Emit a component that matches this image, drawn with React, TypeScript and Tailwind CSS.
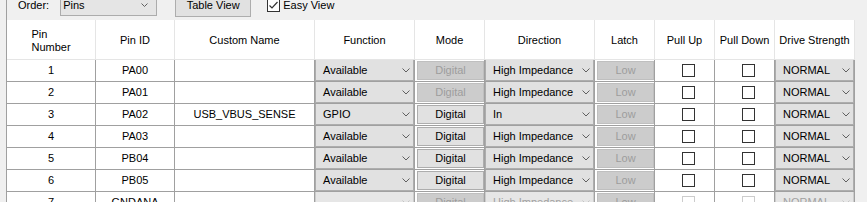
import clsx from 'clsx';

type PinRow = {
  num: string;
  pinId: string;
  name: string;
  func: string;
  modeEnabled: boolean;
  direction: string;
  disabled?: boolean;
};

const rows: PinRow[] = [
  { num: '1', pinId: 'PA00', name: '', func: 'Available', modeEnabled: false, direction: 'High Impedance' },
  { num: '2', pinId: 'PA01', name: '', func: 'Available', modeEnabled: false, direction: 'High Impedance' },
  { num: '3', pinId: 'PA02', name: 'USB_VBUS_SENSE', func: 'GPIO', modeEnabled: true, direction: 'In' },
  { num: '4', pinId: 'PA03', name: '', func: 'Available', modeEnabled: true, direction: 'High Impedance' },
  { num: '5', pinId: 'PB04', name: '', func: 'Available', modeEnabled: true, direction: 'High Impedance' },
  { num: '6', pinId: 'PB05', name: '', func: 'Available', modeEnabled: true, direction: 'High Impedance' },
  { num: '7', pinId: 'GNDANA', name: '', func: '', modeEnabled: false, direction: 'High Impedance', disabled: true },
];

const headers = ['Pin ID', 'Custom Name', 'Function', 'Mode', 'Direction', 'Latch', 'Pull Up', 'Pull Down', 'Drive Strength'];

const gridCols = 'grid w-[848px] shrink-0 grid-cols-[89px_79px_140px_100px_70px_110px_60px_60px_60px_80px]';

function Chevron({ disabled, small }: { disabled?: boolean; small?: boolean }) {
  return (
    <svg
      width={small ? 7 : 8}
      height={small ? 4 : 5}
      viewBox={small ? '0 0 7 4' : '0 0 8 5'}
      className="ml-auto mr-[3px] shrink-0"
    >
      <path
        d={small ? 'M0.5 0.5L3.5 3.5L6.5 0.5' : 'M0.5 0.5L4 4L7.5 0.5'}
        fill="none"
        stroke={disabled ? '#c4c4c4' : '#606060'}
        strokeWidth={1}
      />
    </svg>
  );
}

function Cell({ className, children }: { className?: string; children?: React.ReactNode }) {
  return <div className={clsx('h-[22px] border-r border-b border-[#a0a0a0]', className)}>{children}</div>;
}

function ComboCell({ value, disabled }: { value: string; disabled?: boolean }) {
  return (
    <Cell>
      <div
        className={clsx(
          'flex h-full items-center border-x border-b pl-[7px]',
          disabled ? 'border-[#cccccc] bg-[#e6e6e6] text-[#a0a0a0]' : 'border-[#adadad] bg-[#e1e1e1] text-black'
        )}
      >
        <span className="whitespace-nowrap">{value}</span>
        <Chevron disabled={disabled} />
      </div>
    </Cell>
  );
}

function ButtonCell({ label, enabled }: { label: string; enabled: boolean }) {
  return (
    <Cell className="py-px pl-[2px]">
      <div
        className={clsx(
          'flex h-full items-center justify-center border',
          enabled ? 'border-[#adadad] bg-[#e1e1e1] text-black' : 'border-[#bfbfbf] bg-[#cccccc] text-[#9d9d9d]'
        )}
      >
        {label}
      </div>
    </Cell>
  );
}

function CheckCell({ disabled }: { disabled?: boolean }) {
  return (
    <Cell className="flex items-center justify-center pl-[7px]">
      <div className={clsx('h-[13px] w-[13px] border bg-white', disabled ? 'border-[#cccccc]' : 'border-[#333333]')} />
    </Cell>
  );
}

function TextCell({ value }: { value: string }) {
  return <Cell className="flex items-center justify-center bg-white text-black">{value}</Cell>;
}

export default function App() {
  return (
    <div className="flex h-[202px] w-[867px] overflow-hidden bg-[#f0f0f0] font-['Liberation_Sans',Arial,sans-serif] text-[11px] text-black">
      <div className="w-[6px] shrink-0" />
      <div className="flex flex-1 flex-col border-l border-[#a0a0a0]">
        {/* toolbar */}
        <div className="h-[20px] shrink-0 overflow-hidden">
          <div className="-mt-[6px] flex h-[22px] items-center">
            <span className="ml-[11px]">Order:</span>
            <div className="ml-[11px] flex h-[21px] w-[97px] shrink-0 items-center border border-[#acacac] bg-[#e5e5e5] pl-[2px]">
              <span>Pins</span>
              <span className="ml-auto mr-[5px] flex">
                <Chevron small />
              </span>
            </div>
            <div className="ml-[18px] flex h-[23px] w-[76px] shrink-0 items-center justify-center border border-[#adadad] bg-[#e1e1e1]">
              Table View
            </div>
            <div className="ml-[16px] flex h-[13px] w-[13px] shrink-0 items-center justify-center border border-[#333333] bg-white">
              <svg width="11" height="11" viewBox="0 0 11 11">
                <path d="M1.5 5.5L4 8L9.5 2" fill="none" stroke="#333333" strokeWidth={1.2} />
              </svg>
            </div>
            <span className="ml-[3px]">Easy View</span>
          </div>
        </div>

        {/* header */}
        <div className={clsx(gridCols, 'h-[40px] bg-white')}>
          <div className="flex items-center justify-center border-r border-b border-[#e5e5e5]">
            <span className="inline-block pt-[2px] text-left leading-[13px]">
              Pin
              <br />
              Number
            </span>
          </div>
          {headers.map((h) => (
            <div key={h} className="flex items-center justify-center whitespace-nowrap border-r border-b border-[#e5e5e5] pt-[2px]">
              {h}
            </div>
          ))}
        </div>

        {/* rows */}
        {rows.map((r) => (
          <div key={r.num} className={clsx(gridCols, 'bg-white')}>
            <TextCell value={r.num} />
            <TextCell value={r.pinId} />
            <TextCell value={r.name} />
            <ComboCell value={r.func} disabled={r.disabled} />
            <ButtonCell label="Digital" enabled={r.modeEnabled} />
            <ComboCell value={r.direction} disabled={r.disabled} />
            <ButtonCell label="Low" enabled={false} />
            <CheckCell disabled={r.disabled} />
            <CheckCell disabled={r.disabled} />
            <ComboCell value="NORMAL" disabled={r.disabled} />
          </div>
        ))}
      </div>
    </div>
  );
}
